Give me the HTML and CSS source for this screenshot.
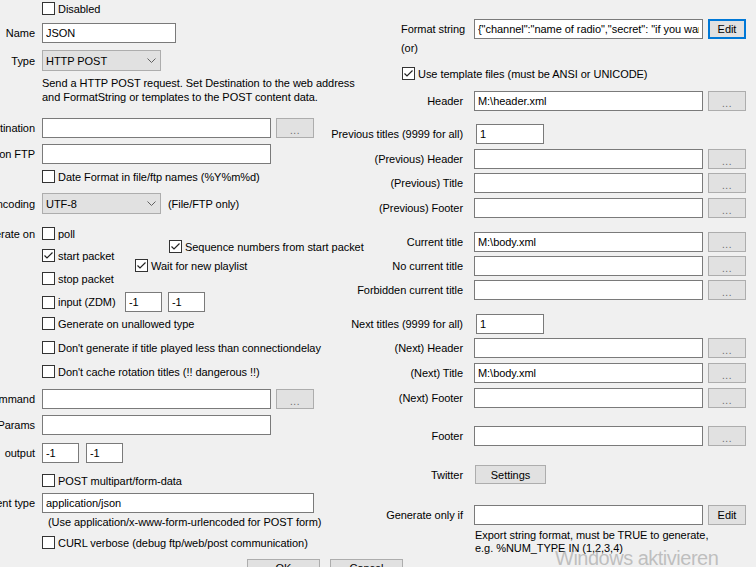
FILE: index.html
```html
<!DOCTYPE html>
<html lang="en">
<head>
<meta charset="utf-8">
<title>HTTP POST output</title>
<link rel="stylesheet" href="styles.css">
</head>
<body>
<div class="dialog">
  <div class="left">
    <div class="row h13 ind mt2"><label class="check"><span class="box"></span>Disabled</label></div>

    <div class="row mt8"><div class="lbl">Name</div><input class="edit w134" type="text" value="JSON"></div>

    <div class="row h21 mt7"><div class="lbl">Type</div>
      <div class="combo w119"><span>HTTP POST</span><svg class="chev" width="9" height="5" viewBox="0 0 9 5"><polyline points="0.5,0.5 4.5,4.5 8.5,0.5" fill="none" stroke="#606060" stroke-width="1"/></svg></div>
    </div>

    <div class="desc ind mt5">Send a HTTP POST request. Set Destination to the web address<br>and FormatString or templates to the POST content data.</div>

    <div class="row mt14"><div class="lbl">Destination</div><input class="edit w229" type="text" value=""><button class="btn dots">...</button></div>

    <div class="row mt6"><div class="lbl">Destination FTP</div><input class="edit w229" type="text" value=""></div>

    <div class="row h13 ind mt6"><label class="check"><span class="box"></span>Date Format in file/ftp names (%Y%m%d)</label></div>

    <div class="row h21 mt10"><div class="lbl">Encoding</div>
      <div class="combo w119"><span>UTF-8</span><svg class="chev" width="9" height="5" viewBox="0 0 9 5"><polyline points="0.5,0.5 4.5,4.5 8.5,0.5" fill="none" stroke="#606060" stroke-width="1"/></svg></div>
      <span class="after-combo">(File/FTP only)</span>
    </div>

    <div class="row h13 mt13"><div class="lbl">Generate on</div><label class="check"><span class="box"></span>poll</label></div>

    <div class="genblock">
      <div class="gen-a">
        <label class="check mt9"><span class="box checked"><svg width="11" height="11" viewBox="0 0 11 11"><polyline points="1.5,5.5 4,8 9.5,2.5" fill="none" stroke="#222" stroke-width="1.2"/></svg></span>start packet</label>
        <label class="check mt10"><span class="box"></span>stop packet</label>
      </div>
      <div class="gen-b">
        <label class="check seq"><span class="box checked"><svg width="11" height="11" viewBox="0 0 11 11"><polyline points="1.5,5.5 4,8 9.5,2.5" fill="none" stroke="#222" stroke-width="1.2"/></svg></span>Sequence numbers from start packet</label>
        <label class="check mt6"><span class="box checked"><svg width="11" height="11" viewBox="0 0 11 11"><polyline points="1.5,5.5 4,8 9.5,2.5" fill="none" stroke="#222" stroke-width="1.2"/></svg></span>Wait for new playlist</label>
      </div>
    </div>

    <div class="row ind mt7"><label class="check zdm"><span class="box"></span>input (ZDM)</label><input class="edit w37" type="text" value="-1"><input class="edit w37 ml6" type="text" value="-1"></div>

    <div class="row h13 ind mt5"><label class="check"><span class="box"></span>Generate on unallowed type</label></div>
    <div class="row h13 ind mt11"><label class="check"><span class="box"></span>Don't generate if title played less than connectiondelay</label></div>
    <div class="row h13 ind mt11"><label class="check"><span class="box"></span>Don't cache rotation titles (!! dangerous !!)</label></div>

    <div class="row mt11"><div class="lbl">Command</div><input class="edit w229" type="text" value=""><button class="btn dots">...</button></div>
    <div class="row mt6"><div class="lbl">Params</div><input class="edit w229" type="text" value=""></div>
    <div class="row mt8"><div class="lbl">output</div><input class="edit w37" type="text" value="-1"><input class="edit w37 ml7" type="text" value="-1"></div>

    <div class="row h13 ind mt11"><label class="check"><span class="box"></span>POST multipart/form-data</label></div>
    <div class="row mt6"><div class="lbl">Content type</div><input class="edit w272" type="text" value="application/json"></div>
    <div class="note mt2">(Use application/x-www-form-urlencoded for POST form)</div>
    <div class="row h13 ind mt7"><label class="check"><span class="box"></span>CURL verbose (debug ftp/web/post communication)</label></div>

    <div class="buttons mt10"><button class="btn pushbtn">OK</button><button class="btn pushbtn">Cancel</button></div>
  </div>

  <div class="right">
    <div class="row mt19"><div class="lbl lbl-left">Format string</div><input class="edit w229" type="text" value="{&quot;channel&quot;:&quot;name of radio&quot;,&quot;secret&quot;: &quot;if you want to use a secret&quot;}"><button class="btn edit-btn default">Edit</button></div>
    <div class="or mt2">(or)</div>
    <div class="row h13 mt12 tpl"><label class="check"><span class="box checked"><svg width="11" height="11" viewBox="0 0 11 11"><polyline points="1.5,5.5 4,8 9.5,2.5" fill="none" stroke="#222" stroke-width="1.2"/></svg></span>Use template files (must be ANSI or UNICODE)</label></div>
    <div class="row mt11"><div class="lbl">Header</div><input class="edit w229" type="text" value="M:\header.xml"><button class="btn dots">...</button></div>

    <div class="row mt13"><div class="lbl">Previous titles (9999 for all)</div><input class="edit w68 ml2" type="text" value="1"></div>
    <div class="row mt5"><div class="lbl">(Previous) Header</div><input class="edit w229" type="text" value=""><button class="btn dots">...</button></div>
    <div class="row mt4"><div class="lbl">(Previous) Title</div><input class="edit w229" type="text" value=""><button class="btn dots">...</button></div>
    <div class="row mt5"><div class="lbl">(Previous) Footer</div><input class="edit w229" type="text" value=""><button class="btn dots">...</button></div>

    <div class="row mt14"><div class="lbl">Current title</div><input class="edit w229" type="text" value="M:\body.xml"><button class="btn dots">...</button></div>
    <div class="row mt4"><div class="lbl">No current title</div><input class="edit w229" type="text" value=""><button class="btn dots">...</button></div>
    <div class="row mt4"><div class="lbl">Forbidden current title</div><input class="edit w229" type="text" value=""><button class="btn dots">...</button></div>

    <div class="row mt14"><div class="lbl">Next titles (9999 for all)</div><input class="edit w68 ml2" type="text" value="1"></div>
    <div class="row mt4"><div class="lbl">(Next) Header</div><input class="edit w229" type="text" value=""><button class="btn dots">...</button></div>
    <div class="row mt5"><div class="lbl">(Next) Title</div><input class="edit w229" type="text" value="M:\body.xml"><button class="btn dots">...</button></div>
    <div class="row mt5"><div class="lbl">(Next) Footer</div><input class="edit w229" type="text" value=""><button class="btn dots">...</button></div>

    <div class="row mt18"><div class="lbl">Footer</div><input class="edit w229" type="text" value=""><button class="btn dots">...</button></div>

    <div class="row h19 mt19"><div class="lbl">Twitter</div><button class="btn settings">Settings</button></div>

    <div class="row mt21"><div class="lbl">Generate only if</div><input class="edit w229" type="text" value=""><button class="btn edit-btn">Edit</button></div>
    <div class="hint mt4">Export string format, must be TRUE to generate,<br>e.g. %NUM_TYPE IN (1,2,3,4)</div>
  </div>
</div>
<div class="watermark">Windows aktivieren</div>
</body>
</html>
```

FILE: styles.css
```css
* { box-sizing: border-box; }
html, body { margin: 0; padding: 0; }
body {
  background: #f0f0f0;
  font-family: "Liberation Sans", Arial, sans-serif;
  font-size: 11px;
  letter-spacing: -0.05px;
  color: #000;
  width: 756px;
  height: 567px;
  overflow: hidden;
  position: relative;
}
.dialog { display: flex; width: 756px; height: 567px; overflow: hidden; }
.left { width: 330px; flex: none; }
.right { width: 426px; flex: none; }

.row { display: flex; align-items: center; height: 20px; white-space: nowrap; }
.row.h13 { height: 13px; }
.row.h19 { height: 19px; }
.row.h21 { height: 21px; }
.ind { padding-left: 42px; }

.lbl {
  width: 35px; flex: none; margin-right: 7px;
  display: flex; justify-content: flex-end; white-space: nowrap;
}
.right .lbl { width: 133px; margin-right: 11px; }
.right .lbl-left { justify-content: flex-start; padding-left: 71px; }

.edit {
  height: 20px; margin: 0; flex: none;
  border: 1px solid #7a7a7a; background: #fff;
  font-family: inherit; font-size: 11px; color: #000; letter-spacing: inherit;
  padding: 0 3px; outline: none; border-radius: 0;
}
.w37 { width: 37px; }
.w68 { width: 68px; }
.w134 { width: 134px; }
.w229 { width: 229px; }
.w272 { width: 272px; }
.ml2 { margin-left: 2px; }
.ml6 { margin-left: 6px; }
.ml7 { margin-left: 7px; }

.combo {
  height: 21px; flex: none;
  display: flex; align-items: center; justify-content: space-between;
  background: #e1e1e1; border: 1px solid #adadad;
  padding: 0 4px 0 3px;
}
.w119 { width: 119px; }
.chev { flex: none; }
.after-combo { margin-left: 7px; }

.check { display: flex; align-items: center; height: 13px; white-space: nowrap; }
.box {
  width: 13px; height: 13px; flex: none; margin-right: 3px;
  border: 1px solid #333; background: #fff;
  display: flex; align-items: center; justify-content: center;
}
.zdm { width: 83px; }

.desc { line-height: 14px; height: 28px; white-space: nowrap; }
.note { line-height: 14px; padding-left: 48px; white-space: nowrap; }
.or { line-height: 14px; padding-left: 71px; }
.tpl { padding-left: 72px; }
.hint { line-height: 13px; padding-left: 145px; white-space: nowrap; }

.genblock { display: flex; }
.gen-a { width: 135px; flex: none; padding-left: 42px; }
.seq { margin-left: 34px; }

.btn {
  height: 20px; margin: 0 0 0 5px; padding: 0; flex: none;
  background: #e1e1e1; border: 1px solid #adadad; border-radius: 0;
  font-family: inherit; font-size: 11px; color: #000; letter-spacing: inherit;
}
.dots { width: 38px; color: #6a6a6a; font-size: 10px; padding-top: 4px; letter-spacing: 0.5px; }
.edit-btn { width: 38px; }
.default { border-color: #0078d7; box-shadow: inset 0 0 0 1px #0078d7; }
.settings { width: 71px; height: 19px; margin-left: 1px; }

.buttons { display: flex; gap: 10px; padding-left: 247px; }
.pushbtn { width: 73px; height: 23px; margin: 0; padding-bottom: 6px; }

.mt2 { margin-top: 2px; }
.mt4 { margin-top: 4px; }
.mt5 { margin-top: 5px; }
.mt6 { margin-top: 6px; }
.mt7 { margin-top: 7px; }
.mt8 { margin-top: 8px; }
.mt9 { margin-top: 9px; }
.mt10 { margin-top: 10px; }
.mt11 { margin-top: 11px; }
.mt12 { margin-top: 12px; }
.mt13 { margin-top: 13px; }
.mt14 { margin-top: 14px; }
.mt18 { margin-top: 18px; }
.mt19 { margin-top: 19px; }
.mt21 { margin-top: 21px; }

.watermark {
  position: absolute; left: 555px; top: 548px;
  font-size: 20px; line-height: 20px; letter-spacing: -0.5px; white-space: nowrap;
  color: rgba(140, 140, 140, 0.5);
  pointer-events: none;
}
```
